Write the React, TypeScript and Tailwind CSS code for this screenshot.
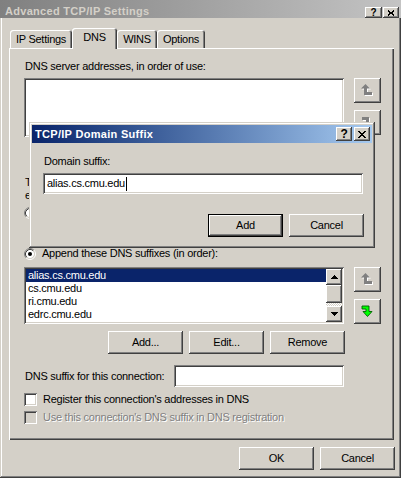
import React from "react";

const RAISED =
  "shadow-[inset_-1px_-1px_#404040,inset_1px_1px_#ffffff,inset_-2px_-2px_#808080,inset_2px_2px_#d4d0c8]";
const SUNKEN =
  "shadow-[inset_1px_1px_#808080,inset_-1px_-1px_#ffffff,inset_2px_2px_#404040,inset_-2px_-2px_#d4d0c8]";
const DEFBTN =
  "shadow-[inset_0_0_0_1px_#000000,inset_-2px_-2px_#404040,inset_2px_2px_#ffffff,inset_-3px_-3px_#808080]";
const WINFRAME =
  "shadow-[inset_-1px_-1px_#404040,inset_1px_1px_#d4d0c8,inset_-2px_-2px_#808080,inset_2px_2px_#ffffff]";

function Btn({ children, def = false }: { children: React.ReactNode; def?: boolean }) {
  return (
    <div
      className={`w-[75px] h-[23px] flex items-center justify-center bg-[#d4d0c8] ${def ? DEFBTN : RAISED}`}
    >
      {children}
    </div>
  );
}

function XGlyph({ w = 8, h = 7 }: { w?: number; h?: number }) {
  return (
    <svg width={w} height={h} viewBox="0 0 8 7" shapeRendering="crispEdges">
      <path d="M0 0h2v1h-2zM6 0h2v1h-2zM1 1h2v1h-2zM5 1h2v1h-2zM2 2h4v1h-4zM3 3h2v1h-2zM2 4h4v1h-4zM1 5h2v1h-2zM5 5h2v1h-2zM0 6h2v1h-2zM6 6h2v1h-2z" fill="#000" />
    </svg>
  );
}

function Radio({ checked = false }: { checked?: boolean }) {
  return (
    <svg width="12" height="12" viewBox="0 0 12 12" className="shrink-0">
      <circle cx="6" cy="6" r="4.2" fill="#ffffff" />
      <path d="M2.11 9.89 A5.5 5.5 0 0 1 9.89 2.11" stroke="#808080" strokeWidth="1" fill="none" />
      <path d="M9.89 2.11 A5.5 5.5 0 0 1 2.11 9.89" stroke="#ffffff" strokeWidth="1" fill="none" />
      <path d="M2.82 9.18 A4.5 4.5 0 0 1 9.18 2.82" stroke="#404040" strokeWidth="1" fill="none" />
      <path d="M9.18 2.82 A4.5 4.5 0 0 1 2.82 9.18" stroke="#d4d0c8" strokeWidth="1" fill="none" />
      {checked && <circle cx="6" cy="6" r="2" fill="#000000" />}
    </svg>
  );
}

function Check({ disabled = false }: { disabled?: boolean }) {
  return (
    <div className={`w-[13px] h-[13px] shrink-0 ${disabled ? "bg-[#d4d0c8]" : "bg-white"} ${SUNKEN}`} />
  );
}

function UpIcon() {
  return (
    <svg width="13" height="13" viewBox="0 0 13 13">
      <polygon points="5.5,1 10,5.5 7,5.5 7,9 12,9 12,12 4,12 4,5.5 1,5.5" fill="#ffffff" />
      <polygon points="4.5,0 9,4.5 6,4.5 6,8 11,8 11,11 3,11 3,4.5 0,4.5" fill="#808080" />
    </svg>
  );
}

function DownIcon({ enabled = false }: { enabled?: boolean }) {
  if (enabled) {
    return (
      <svg width="13" height="13" viewBox="0 0 13 13">
        <polygon
          points="1,1 8,1 8,6.5 11,6.5 6.5,11.5 2,6.5 5,6.5 5,4 1,4"
          fill="#00ff00"
          stroke="#006000"
          strokeWidth="0.9"
        />
      </svg>
    );
  }
  return (
    <svg width="13" height="13" viewBox="0 0 13 13">
      <polygon points="2,2 9,2 9,7.5 12,7.5 7.5,12 3,7.5 6,7.5 6,5 2,5" fill="#ffffff" />
      <polygon points="1,1 8,1 8,6.5 11,6.5 6.5,11 2,6.5 5,6.5 5,4 1,4" fill="#808080" />
    </svg>
  );
}

function SideBtn({ children }: { children: React.ReactNode }) {
  return (
    <div className={`w-[27px] h-[25px] flex items-center justify-center bg-[#d4d0c8] ${RAISED}`}>
      {children}
    </div>
  );
}

function ScrollArrow({ up }: { up: boolean }) {
  return (
    <div className={`w-[16px] h-[16px] flex items-center justify-center bg-[#d4d0c8] ${RAISED}`}>
      <svg width="7" height="4" viewBox="0 0 7 4" shapeRendering="crispEdges">
        {up ? (
          <path d="M3 0h1v1h-1zM2 1h3v1h-3zM1 2h5v1h-5zM0 3h7v1h-7z" fill="#000" />
        ) : (
          <path d="M0 0h7v1h-7zM1 1h5v1h-5zM2 2h3v1h-3zM3 3h1v1h-1z" fill="#000" />
        )}
      </svg>
    </div>
  );
}

function Tab({ label, w, selected = false }: { label: string; w: string; selected?: boolean }) {
  return (
    <div
      className={`${w} ${
        selected ? "h-[21px] -mb-px relative z-10 pb-[3px]" : "h-[18px] pt-[1px]"
      } flex items-center justify-center bg-[#d4d0c8] rounded-t-[3px] shadow-[inset_1px_1px_#ffffff,inset_-1px_0_#404040,inset_-2px_0_#808080]`}
    >
      {label}
    </div>
  );
}

export default function App() {
  const items = ["alias.cs.cmu.edu", "cs.cmu.edu", "ri.cmu.edu", "edrc.cmu.edu", "ece.cmu.edu"];
  return (
    <div
      className={`relative w-[401px] h-[478px] bg-[#d4d0c8] overflow-hidden flex flex-col text-[11px] leading-[13px] tracking-[-0.25px] text-black font-['Liberation_Sans',Arial,sans-serif] ${WINFRAME}`}
    >
      {/* Title bar */}
      <div className="h-[18px] flex items-start justify-between bg-gradient-to-r from-[#808080] to-[#c4c4c4] pl-[5px] pr-[2px] shrink-0">
        <span className="pt-[5px] font-bold text-[#d4d0c8] tracking-[0.3px]">Advanced TCP/IP Settings</span>
        <div className="flex gap-[1px] pt-[7px]">
          <div className={`w-[17px] h-[11px] flex items-center justify-center bg-[#d4d0c8] font-bold text-[10px] leading-[10px] ${RAISED}`}>
            ?
          </div>
          <div className={`w-[16px] h-[11px] flex items-center justify-center bg-[#d4d0c8] ${RAISED}`}>
            <XGlyph w={8} h={6} />
          </div>
        </div>
      </div>

      {/* Tabs */}
      <div className="mt-[10px] h-[20px] flex items-end pl-[10px] shrink-0">
        <Tab label="IP Settings" w="w-[62px]" />
        <Tab label="DNS" w="w-[45px]" selected />
        <Tab label="WINS" w="w-[40px]" />
        <Tab label="Options" w="w-[48px]" />
      </div>

      {/* Panel */}
      <div className="relative ml-[9px] w-[385px] h-[392px] shrink-0 shadow-[inset_1px_1px_#ffffff,inset_-1px_-1px_#404040,inset_-2px_-2px_#808080] pl-[15px] flex flex-col">
        <div className="mt-[12px] pl-[1px]">DNS server addresses, in order of use:</div>
        <div className="mt-[5px] flex gap-[10px]">
          <div className={`w-[320px] h-[59px] bg-white ${SUNKEN}`} />
          <div className="flex flex-col gap-[7px]">
            <SideBtn>
              <UpIcon />
            </SideBtn>
            <SideBtn>
              <DownIcon />
            </SideBtn>
          </div>
        </div>
        <div className="mt-[6px] w-[320px] flex justify-end gap-[6px]">
          <Btn>Add...</Btn>
          <Btn>Edit...</Btn>
          <Btn>Remove</Btn>
        </div>
        <div className="mt-[10px] pl-[1px]">
          The following three settings are applied to all connections with TCP/IP
          <br />
          enabled. For resolution of unqualified names:
        </div>
        <div className="mt-[4px] h-[13px] flex items-center gap-[6px]">
          <Radio />
          <span>Append primary and connection specific DNS suffixes</span>
        </div>
        <div className="mt-[7px] h-[13px] flex items-center gap-[6px] pl-[18px]">
          <Check />
          <span>Append parent suffixes of the primary DNS suffix</span>
        </div>
        <div className="mt-[8px] h-[13px] flex items-center gap-[6px]">
          <Radio checked />
          <span>Append these DNS suffixes (in order):</span>
        </div>
        <div className="mt-[7px] flex gap-[10px]">
          <div className={`w-[320px] h-[57px] bg-white p-[2px] flex ${SUNKEN}`}>
            <div className="flex-1 overflow-hidden">
              {items.map((t, i) => (
                <div
                  key={t}
                  className={`h-[13px] pl-[2px] ${i === 0 ? "bg-[#0a246a] text-white" : ""}`}
                >
                  {t}
                </div>
              ))}
            </div>
            <div className="w-[16px] flex flex-col">
              <ScrollArrow up />
              <div className={`h-[18px] bg-[#d4d0c8] ${RAISED}`} />
              <div className="flex-1 bg-[repeating-conic-gradient(#d4d0c8_0%_25%,#ffffff_0%_50%)] bg-[length:2px_2px]" />
              <ScrollArrow up={false} />
            </div>
          </div>
          <div className="flex flex-col gap-[7px]">
            <SideBtn>
              <UpIcon />
            </SideBtn>
            <SideBtn>
              <DownIcon enabled />
            </SideBtn>
          </div>
        </div>
        <div className="mt-[7px] w-[321px] flex justify-end gap-[6px]">
          <Btn>Add...</Btn>
          <Btn>Edit...</Btn>
          <Btn>Remove</Btn>
        </div>
        <div className="mt-[11px] w-[320px] flex items-center justify-between">
          <span className="pl-[1px]">DNS suffix for this connection:</span>
          <div className={`w-[170px] h-[22px] bg-white ${SUNKEN}`} />
        </div>
        <div className="mt-[6px] h-[13px] flex items-center gap-[6px]">
          <Check />
          <span>Register this connection's addresses in DNS</span>
        </div>
        <div className="mt-[5px] h-[13px] flex items-center gap-[6px]">
          <Check disabled />
          <span className="text-[#808080] [text-shadow:1px_1px_0_#ffffff]">
            Use this connection's DNS suffix in DNS registration
          </span>
        </div>
      </div>

      {/* Footer */}
      <div className="mt-[7px] flex justify-end gap-[6px] pr-[6px]">
        <Btn>OK</Btn>
        <Btn>Cancel</Btn>
      </div>

      {/* Sub dialog */}
      <div
        className={`absolute left-[29px] top-[122px] w-[346px] h-[126px] z-20 bg-[#d4d0c8] flex flex-col ${WINFRAME}`}
      >
        <div className="mt-[3px] mx-[3px] h-[18px] flex items-center justify-between bg-gradient-to-r from-[#0a246a] to-[#a6caf0] pl-[3px] pr-[2px]">
          <span className="font-bold text-white tracking-[0.3px]">TCP/IP Domain Suffix</span>
          <div className="flex gap-[2px]">
            <div className={`w-[16px] h-[14px] flex items-center justify-center bg-[#d4d0c8] font-bold text-[12px] leading-[12px] ${RAISED}`}>
              ?
            </div>
            <div className={`w-[16px] h-[14px] flex items-center justify-center bg-[#d4d0c8] ${RAISED}`}>
              <XGlyph />
            </div>
          </div>
        </div>
        <div className="pl-[14px] flex flex-col">
          <div className="mt-[12px] pl-[1px]">Domain suffix:</div>
          <div className={`mt-[5px] w-[320px] h-[21px] bg-white flex items-center pl-[4px] ${SUNKEN}`}>
            <span>alias.cs.cmu.edu</span>
            <span className="w-[1px] h-[14px] bg-black ml-[1px]" />
          </div>
          <div className="mt-[20px] w-[321px] flex justify-end gap-[6px]">
            <Btn def>Add</Btn>
            <Btn>Cancel</Btn>
          </div>
        </div>
      </div>
    </div>
  );
}
